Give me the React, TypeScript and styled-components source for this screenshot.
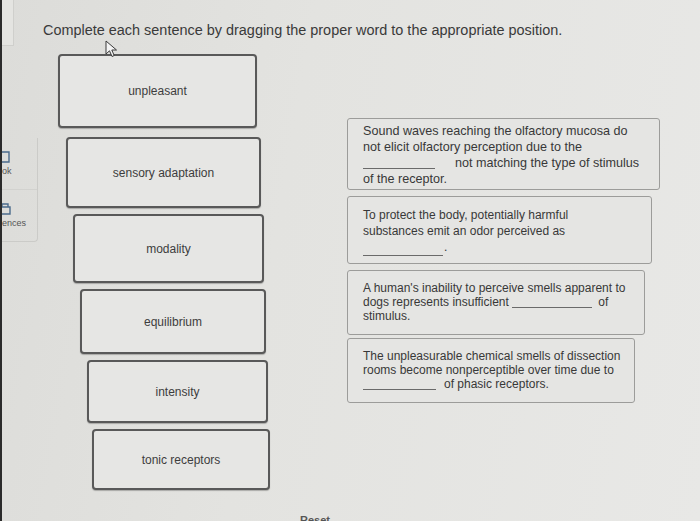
import styled, { createGlobalStyle } from 'styled-components';

const GlobalStyle = createGlobalStyle`
  html, body {
    margin: 0;
    padding: 0;
    background: #e0e0dd;
  }
  body {
    font-family: "Liberation Sans", Arial, sans-serif;
    color: #3b3b3b;
  }
`;

const Page = styled.div`
  position: relative;
  display: flex;
  width: 700px;
  height: 521px;
  overflow: hidden;
  background: linear-gradient(100deg, #dcdcd9 0%, #e3e3e0 40%, #e8e8e6 100%);
  border-left: 2px solid #2b2b2b;
  box-sizing: border-box;
`;

const Sidebar = styled.aside`
  width: 36px;
  flex-shrink: 0;
  display: flex;
  flex-direction: column;
`;

const SideTab = styled.div`
  width: 11px;
  height: 45px;
  border-right: 1px solid #cfcfcc;
  border-bottom: 1px solid #cfcfcc;
  background: #e4e4e1;
`;

const SidePanel = styled.div`
  margin-top: 92px;
  height: 103px;
  border-right: 1px solid #cbcbc8;
  border-bottom: 1px solid #cbcbc8;
  border-radius: 0 0 4px 0;
  display: flex;
  flex-direction: column;
`;

const NavItem = styled.div<{ $divider?: boolean }>`
  flex: 1;
  display: flex;
  flex-direction: column;
  justify-content: center;
  gap: 3px;
  font-size: 9px;
  color: #555;
  border-bottom: ${(p) => (p.$divider ? '1px solid #d2d2cf' : 'none')};
  svg {
    display: block;
  }
`;

const Main = styled.main`
  flex: 1;
  display: flex;
  flex-direction: column;
  padding-left: 5px;
`;

const Title = styled.h1`
  margin: 22px 0 0;
  font-size: 14.45px;
  line-height: 16px;
  font-weight: normal;
  color: #3a3a3a;
`;

const Board = styled.div`
  display: flex;
  margin-top: 16px;
`;

const WordColumn = styled.div`
  width: 304px;
  flex-shrink: 0;
  display: flex;
  flex-direction: column;
`;

const WordCard = styled.div<{ $x: number; $w: number; $h: number; $gap: number }>`
  margin-left: ${(p) => p.$x}px;
  margin-top: ${(p) => p.$gap}px;
  width: ${(p) => p.$w}px;
  height: ${(p) => p.$h}px;
  box-sizing: border-box;
  border: 2px solid #595959;
  border-radius: 4px;
  background: #e6e6e4;
  box-shadow: 0 1px 1px rgba(0, 0, 0, 0.25);
  display: flex;
  align-items: center;
  justify-content: center;
  font-size: 12px;
  color: #3d3d3d;
`;

const SentenceColumn = styled.div`
  display: flex;
  flex-direction: column;
  margin-top: 64px;
`;

const SentenceCard = styled.div<{ $w: number; $h: number; $gap: number; $pt: number; $lh: number; $fs?: number }>`
  margin-top: ${(p) => p.$gap}px;
  width: ${(p) => p.$w}px;
  height: ${(p) => p.$h}px;
  box-sizing: border-box;
  border: 1.5px solid #9c9c9a;
  border-radius: 3px;
  background: #e5e5e3;
  padding: ${(p) => p.$pt}px 8px 0 15px;
  font-size: ${(p) => p.$fs ?? 12}px;
  line-height: ${(p) => p.$lh}px;
  color: #383838;
  white-space: nowrap;
`;

const Blank = styled.span<{ $w: number; $drop?: number; $after: number }>`
  display: inline-block;
  width: ${(p) => p.$w}px;
  height: 11px;
  margin-right: ${(p) => p.$after}px;
  border-bottom: 1px solid #6a6a6a;
  vertical-align: ${(p) => -(p.$drop ?? 2)}px;
`;

const Footer = styled.div`
  margin-top: 24px;
  padding-left: 257px;
  font-size: 11px;
  font-weight: bold;
  color: #555;
`;

const Cursor = styled.svg`
  position: absolute;
  left: 103px;
  top: 40px;
`;

const words = [
  { label: 'unpleasant', x: 15, w: 199, h: 74, gap: 0 },
  { label: 'sensory adaptation', x: 23, w: 195, h: 71, gap: 9 },
  { label: 'modality', x: 30, w: 191, h: 69, gap: 6 },
  { label: 'equilibrium', x: 37, w: 186, h: 65, gap: 6 },
  { label: 'intensity', x: 44, w: 181, h: 63, gap: 6 },
  { label: 'tonic receptors', x: 49, w: 178, h: 61, gap: 6 },
];

export default function App() {
  return (
    <>
      <GlobalStyle />
      <Page>
        <Sidebar>
          <SideTab />
          <SidePanel>
            <NavItem $divider>
              <svg width="10" height="12" viewBox="0 0 10 12">
                <path d="M-2 1 H7 V11 H-2" fill="none" stroke="#4b6b8c" strokeWidth="1.4" />
              </svg>
              <span>ok</span>
            </NavItem>
            <NavItem>
              <svg width="10" height="12" viewBox="0 0 10 12">
                <path d="M-2 4 H8 V11 H-2 M0 4 V1 H6 V4" fill="none" stroke="#4b6b8c" strokeWidth="1.4" />
              </svg>
              <span>ences</span>
            </NavItem>
          </SidePanel>
        </Sidebar>
        <Main>
          <Title>Complete each sentence by dragging the proper word to the appropriate position.</Title>
          <Board>
            <WordColumn>
              {words.map((w) => (
                <WordCard key={w.label} $x={w.x} $w={w.w} $h={w.h} $gap={w.gap}>
                  {w.label}
                </WordCard>
              ))}
            </WordColumn>
            <SentenceColumn>
              <SentenceCard $w={313} $h={72} $gap={0} $pt={4} $lh={16} $fs={12.6}>
                Sound waves reaching the olfactory mucosa do
                <br />
                not elicit olfactory perception due to the
                <br />
                <Blank $w={72} $after={20} />
                not matching the type of stimulus
                <br />
                of the receptor.
              </SentenceCard>
              <SentenceCard $w={305} $h={68} $gap={6} $pt={10} $lh={16}>
                To protect the body, potentially harmful
                <br />
                substances emit an odor perceived as
                <br />
                <Blank $w={80} $drop={5} $after={1} />.
              </SentenceCard>
              <SentenceCard $w={298} $h={65} $gap={6} $pt={10} $lh={14}>
                A human's inability to perceive smells apparent to
                <br />
                dogs represents insufficient <Blank $w={80} $after={6} />
                of
                <br />
                stimulus.
              </SentenceCard>
              <SentenceCard $w={288} $h={65} $gap={3} $pt={10} $lh={14}>
                The unpleasurable chemical smells of dissection
                <br />
                rooms become nonperceptible over time due to
                <br />
                <Blank $w={73} $after={8} />
                of phasic receptors.
              </SentenceCard>
            </SentenceColumn>
          </Board>
          <Footer>Reset</Footer>
        </Main>
        <Cursor width="14" height="18" viewBox="0 0 14 18">
          <path d="M1 1 L1 14 L4.5 10.8 L7 16.5 L9.2 15.5 L6.8 10 L11.5 10 Z" fill="#f4f4f4" stroke="#3a3a3a" strokeWidth="1" />
        </Cursor>
      </Page>
    </>
  );
}
